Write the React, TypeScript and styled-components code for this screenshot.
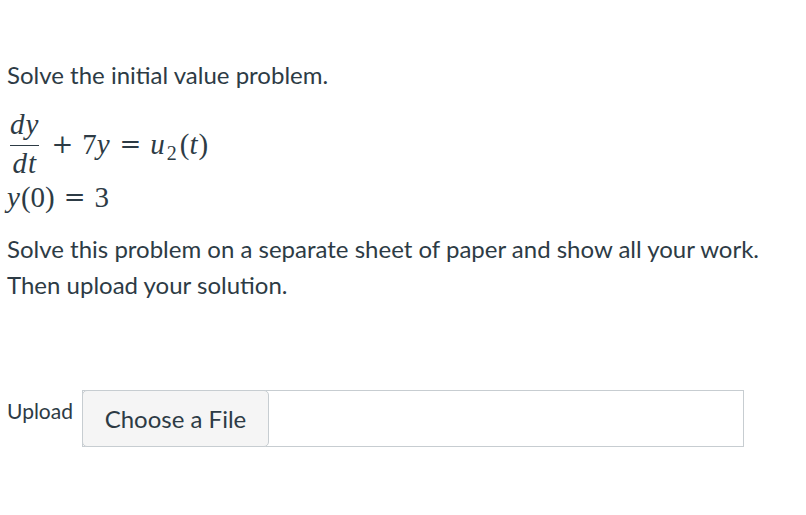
import { createGlobalStyle, styled } from 'styled-components'

const GlobalStyle = createGlobalStyle`
  body {
    margin: 0;
    background: #ffffff;
    color: #2d3b45;
    font-family: Lato, "Open Sans", sans-serif;
  }
`

const Page = styled.main`
  padding: 57px 7px 0 7px;
  display: flex;
  flex-direction: column;
`

const Paragraph = styled.p`
  margin: 0;
  font-size: 24px;
  line-height: 36px;
`

const MathBlock = styled.div`
  margin-top: 17px;
  display: flex;
  flex-direction: column;
  gap: 6px;
  font-family: "Liberation Serif", "DejaVu Serif", serif;
  font-size: 29px;
  line-height: 28px;
  color: #2d3b45;
`

const MathRow = styled.div`
  display: flex;
  align-items: center;
`

const Fraction = styled.span`
  display: inline-flex;
  flex-direction: column;
  align-items: center;
  padding: 0 3px;
`

const FractionBar = styled.span`
  align-self: stretch;
  height: 1px;
  background: #2d3b45;
  margin: 7px 0 3px;
`

const Var = styled.i`
  font-style: italic;
  letter-spacing: 1px;
`

// operators in a wider face, like the TeX + and =
const Op = styled.span`
  font-family: "DejaVu Serif", "Liberation Serif", serif;
  font-size: 26px;
  margin: 0 9px;
`

const Sub = styled.sub`
  font-size: 20px;
  vertical-align: -6px;
  line-height: 0;
  margin: 0 3px 0 1px;
`

const Note = styled.div`
  margin-top: 20px;
`

const UploadRow = styled.div`
  margin-top: 87px;
  display: flex;
  align-items: flex-start;
  gap: 9px;
`

const UploadLabel = styled.label`
  font-size: 21px;
  line-height: 24px;
  padding-top: 9px;
`

const FileInput = styled.div`
  width: 662px;
  height: 57px;
  box-sizing: border-box;
  border: 1px solid #c7cdd1;
  display: flex;
`

const ChooseButton = styled.button`
  width: 187px;
  margin: -1px 0 0 -1px;
  height: 57px;
  background: #f5f5f5;
  border: 1px solid #c7cdd1;
  border-radius: 5px;
  font-family: Lato, "Open Sans", sans-serif;
  font-size: 24px;
  color: #2d3b45;
  padding: 0;
`

export default function App() {
  return (
    <>
      <GlobalStyle />
      <Page>
        <Paragraph>Solve the initial value problem.</Paragraph>

        <MathBlock>
          <MathRow>
            <Fraction>
              <span><Var>dy</Var></span>
              <FractionBar />
              <span><Var>dt</Var></span>
            </Fraction>
            <Op>+</Op>
            <span>7<Var>y</Var></span>
            <Op>=</Op>
            <span><Var>u</Var><Sub>2</Sub>(<Var>t</Var>)</span>
          </MathRow>
          <MathRow>
            <span><Var>y</Var>(0)</span>
            <Op>=</Op>
            <span>3</span>
          </MathRow>
        </MathBlock>

        <Note>
          <Paragraph>Solve this problem on a separate sheet of paper and show all your work.</Paragraph>
          <Paragraph>Then upload your solution.</Paragraph>
        </Note>

        <UploadRow>
          <UploadLabel>Upload</UploadLabel>
          <FileInput>
            <ChooseButton type="button">Choose a File</ChooseButton>
          </FileInput>
        </UploadRow>
      </Page>
    </>
  )
}
